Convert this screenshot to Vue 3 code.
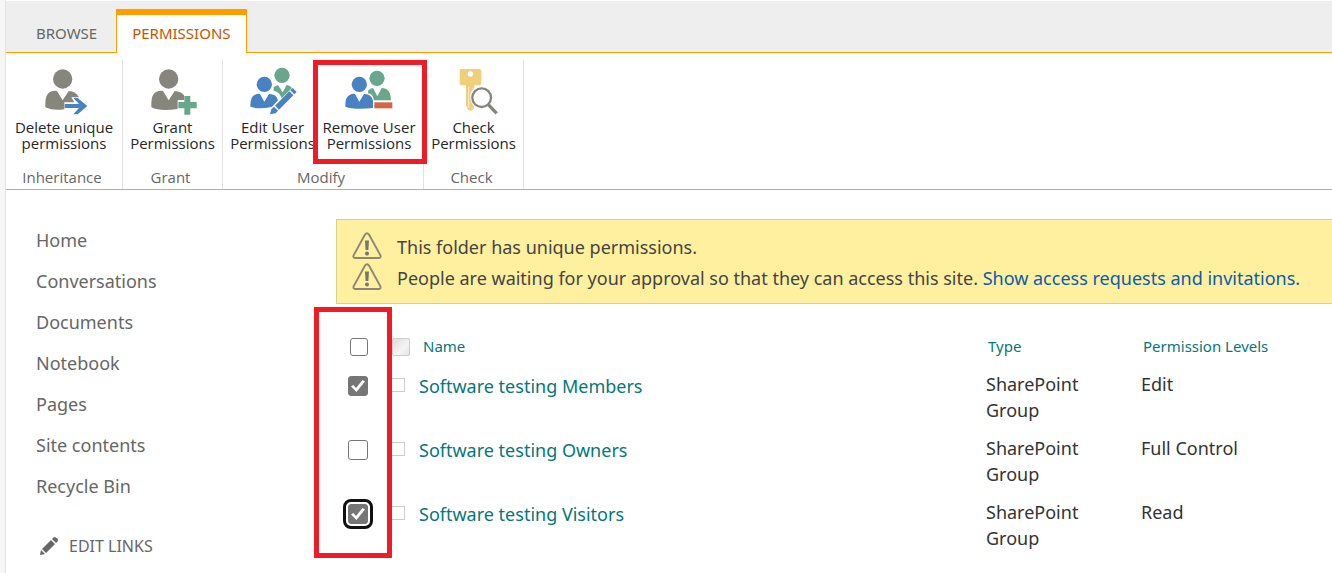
<script setup>
import { ref } from 'vue'

const nav = ['Home', 'Conversations', 'Documents', 'Notebook', 'Pages', 'Site contents', 'Recycle Bin']
const allSelected = ref(false)
const groups = ref([
  { name: 'Software testing Members', level: 'Edit', selected: true, focused: false },
  { name: 'Software testing Owners', level: 'Full Control', selected: false, focused: false },
  { name: 'Software testing Visitors', level: 'Read', selected: true, focused: true }
])
</script>

<template>
  <div class="page">
    <nav class="tabs" aria-label="Ribbon tabs">
      <a class="tab" href="#">BROWSE</a>
      <a class="tab active" href="#">PERMISSIONS</a>
    </nav>

    <section class="ribbon">
      <div class="group">
        <div class="tools">
          <button class="tool" type="button">
            <svg viewBox="15 15 144 144">
              <circle cx="83" cy="51" r="29" fill="#87867d" />
              <path d="M31 136V122Q32 97 45 90Q56 85 66 87L83 115L101 87Q121 87 132 106H109L118 121H88V142Q54 147 31 136Z" fill="#87867d" />
              <path d="M89 126H132L115 108H128L157 132L128 157H115L132 138H89Z" fill="#4882c3" />
            </svg>
            Delete unique<br />permissions
          </button>
        </div>
        <h2>Inheritance</h2>
      </div>

      <div class="group">
        <div class="tools">
          <button class="tool" type="button">
            <svg viewBox="12 15 144 144">
              <circle cx="71" cy="51" r="29" fill="#87867d" />
              <path d="M19 136V122Q20 97 33 90Q44 85 54 87L71 115L89 87Q108 88 117 100V114H98V141Q45 149 19 136Z" fill="#87867d" />
              <path d="M118 102H136V120H155V139H136V158H118V139H100V120H118Z" fill="#69a78d" />
            </svg>
            Grant<br />Permissions
          </button>
        </div>
        <h2>Grant</h2>
      </div>

      <div class="group">
        <div class="tools">
          <button class="tool" type="button">
            <svg viewBox="13 15 144 144">
              <circle cx="112" cy="40" r="23" fill="#69a78d" />
              <path d="M87 75L100 69L114 91L126 69Q137 71 142 78L111 109Q105 90 87 86Z" fill="#69a78d" />
              <circle cx="59" cy="67" r="23" fill="#4882c3" />
              <path d="M17 134Q16 103 31 98Q39 94 46 96L59 119L73 96Q95 95 100 115L82 134Q43 143 17 134Z" fill="#4882c3" />
              <path d="M144 78L156 90L149 97L137 85ZM134 88L146 100L103 143L91 131ZM88 134L100 146L93 154L76 157L80 142Z" fill="#4882c3" />
            </svg>
            Edit User<br />Permissions
          </button>
          <button class="tool remove" type="button">
            <svg viewBox="16 15 144 144">
              <circle cx="112" cy="49" r="23" fill="#69a78d" />
              <path d="M85 86Q92 78 100 78L113 103L126 78Q153 78 154 115H103Q99 94 85 94Z" fill="#69a78d" />
              <circle cx="59" cy="67" r="23" fill="#4882c3" />
              <path d="M17 134Q16 103 31 98Q39 94 46 96L59 119L73 96Q95 95 100 116V138Q43 144 17 134Z" fill="#4882c3" />
              <path d="M104 121H158V139H104Z" fill="#d56443" />
            </svg>
            Remove User<br />Permissions
            <span class="marker marker-button"></span>
          </button>
        </div>
        <h2>Modify</h2>
      </div>

      <div class="group">
        <div class="tools">
          <button class="tool" type="button">
            <svg viewBox="3 15 144 144">
              <path fill-rule="evenodd" d="M37 21H91Q97 21 97 27V64Q97 70 91 70H76V78Q62 90 64 108Q66 124 74 131V140Q65 152 55 141V136L51 132V70H37Q32 70 32 64V27Q32 21 37 21ZM64 28A8 8 0 1 0 64 44A8 8 0 1 0 64 28Z" fill="#f0ce7c" />
              <path d="M59 75V137" stroke="#fff" stroke-width="2" />
              <circle cx="98" cy="107" r="28" fill="#fff" stroke="#87867d" stroke-width="7" />
              <path d="M118 128L143 154" stroke="#87867d" stroke-width="10" />
            </svg>
            Check<br />Permissions
          </button>
        </div>
        <h2>Check</h2>
      </div>
    </section>

    <div class="body">
      <nav class="side" aria-label="Site">
        <a v-for="item in nav" :key="item" href="#">{{ item }}</a>
        <button class="edit-links" type="button">
          <svg viewBox="0 0 18 18">
            <path d="M0 18L1 13L5 17ZM2 12L11 3L15 7L6 16ZM12 2L14 0Q16 0 17.500 1.500Q18 3 18 4L16 6Z" fill="#666" />
          </svg>
          EDIT LINKS
        </button>
      </nav>

      <main>
        <div class="notice">
          <p v-for="n in 2" :key="n">
            <svg viewBox="0 0 30 27">
              <path d="M13 2.500Q15 0 17 2.500L28.500 23.500Q29 26 27 26H3Q1 26 1.500 23.500Z" fill="none" stroke="#8b8776" stroke-width="1.900" />
              <path d="M13 8.500H17L16.400 18H13.600Z" fill="#77746c" />
              <circle cx="15" cy="21.500" r="2" fill="#77746c" />
            </svg>
            <span v-if="n === 1">This folder has unique permissions.</span>
            <span v-else>People are waiting for your approval so that they can access this site. <a href="#">Show access requests and invitations.</a></span>
          </p>
        </div>

        <div class="list">
          <table>
            <thead>
              <tr>
                <th class="pick"><input v-model="allSelected" type="checkbox" aria-label="Select all" /></th>
                <th class="state"><span class="swatch"></span></th>
                <th class="name"><a href="#">Name</a></th>
                <th class="type"><a href="#">Type</a></th>
                <th class="level"><a href="#">Permission Levels</a></th>
              </tr>
            </thead>
            <tbody>
              <tr v-for="g in groups" :key="g.name">
                <td class="pick"><input v-model="g.selected" type="checkbox" :class="{ focused: g.focused }" :aria-label="g.name" /></td>
                <td class="state"><span class="presence"></span></td>
                <td class="name"><a href="#">{{ g.name }}</a></td>
                <td class="type">SharePoint Group</td>
                <td class="level">{{ g.level }}</td>
              </tr>
            </tbody>
          </table>
          <span class="marker marker-column"></span>
        </div>
      </main>
    </div>
  </div>
</template>

<style>
body {
  background: #fff;
  overflow: hidden;
}
</style>

<style scoped>
.page {
  box-sizing: border-box;
  min-height: 100vh;
  border-left: 5px solid #f6f6f6;
  padding: 1px 0 0 1px;
  font-family: "Noto Sans", "Open Sans", sans-serif;
  font-size: 18px;
  line-height: 26px;
  color: #333;
  box-shadow: inset 1px 0 #e3e3e3;
}
a {
  text-decoration: none;
  color: inherit;
}
button {
  font: inherit;
  color: inherit;
  background: none;
  border: 0;
  padding: 0;
}
.tabs {
  display: flex;
  align-items: flex-end;
  gap: 3px;
  height: 51px;
  padding-left: 14px;
  background: #eee;
  border-bottom: 1px solid #ff9d00;
}
.tab {
  padding: 0 16px 1px;
  font-size: 15px;
  line-height: 36px;
  color: #666;
}
.tab.active {
  margin-bottom: -1px;
  padding: 0 15px 2px;
  border: 1px solid #ff9d00;
  border-top-width: 6px;
  border-bottom: 0;
  background: #fff;
  color: #c45500;
}
.ribbon {
  display: flex;
  padding-top: 7px;
  border-bottom: 1px solid #f5a623;
}
.group {
  min-width: 99px;
  padding-top: 7px;
  border-right: 1px solid #e1e1e1;
}
.group:first-child {
  min-width: 116px;
}
.tools {
  display: flex;
}
.tool {
  position: relative;
  flex: 1;
  min-width: 99px;
  font-family: "Open Sans", "Noto Sans", sans-serif;
  font-size: 15px;
  line-height: 16px;
  text-align: center;
  color: #262626;
  white-space: nowrap;
}
.tool svg {
  display: block;
  width: 48px;
  height: 48px;
  margin: 0 auto 4px;
}
.tool.remove {
  min-width: 94px;
  margin-right: 7px;
}
.group h2 {
  margin: 18px 4px 4px 0;
  font-family: "Open Sans", "Noto Sans", sans-serif;
  font-size: 15px;
  font-weight: 400;
  line-height: 16px;
  text-align: center;
  color: #666;
}
.marker {
  position: absolute;
  z-index: 1;
  border: 5px solid #ee1c25;
  pointer-events: none;
}
.marker-button {
  inset: -7px -11px -13px -9px;
}
.marker-column {
  left: -22px;
  top: -13px;
  bottom: 5px;
  width: 68px;
}
.body {
  display: grid;
  grid-template-columns: 330px 1fr;
}
.side {
  display: flex;
  flex-direction: column;
  align-items: flex-start;
  padding: 30px 0 0 30px;
  color: #666;
}
.side a {
  line-height: 41px;
}
.edit-links {
  display: flex;
  align-items: center;
  gap: 11px;
  margin-top: 26px;
  padding-left: 4px;
  font-size: 16px;
}
.edit-links svg {
  width: 18px;
  height: 18px;
}
main {
  padding-top: 29px;
  min-width: 0;
}
.notice {
  padding: 12px 15px 9px;
  border: 1px solid #d8d284;
  border-right: 0;
  background: #fff09f;
  color: #444;
  white-space: nowrap;
}
.notice p {
  display: flex;
  align-items: flex-start;
  gap: 15px;
  margin: 0;
  line-height: 31px;
}
.notice svg {
  width: 30px;
  height: 27px;
}
.notice a {
  color: #0b5cad;
}
.list {
  position: relative;
  margin-top: 16px;
}
table {
  width: 100%;
  border-collapse: collapse;
  table-layout: fixed;
}
th,
td {
  padding: 0 0 12px;
  text-align: left;
  vertical-align: top;
  font-weight: 400;
}
th {
  padding: 13px 0 12px 2px;
  font-size: 15px;
}
.pick {
  width: 51px;
}
.state {
  width: 32px;
}
th.name {
  padding-left: 4px;
}
td.name {
  padding-top: 2px;
  padding-bottom: 10px;
}
.type {
  width: 153px;
}
td.type {
  padding-right: 40px;
}
.level {
  width: 189px;
}
th.pick,
th.state {
  padding: 18px 0 0;
}
td.pick {
  padding-top: 5px;
  padding-bottom: 0;
}
th a,
.name a {
  color: #037878;
}
input {
  appearance: none;
  display: grid;
  place-items: center;
  box-sizing: border-box;
  width: 20px;
  height: 20px;
  margin: 0 0 0 12px;
  border: 1px solid #767676;
  border-radius: 3px;
  background: #fff;
}
th input {
  width: 18px;
  height: 18px;
  margin-left: 14px;
}
input:checked {
  background: #767676;
}
input:checked::after {
  content: "";
  width: 14px;
  height: 12px;
  background: #fff;
  clip-path: polygon(0 55%, 17% 42%, 36% 66%, 82% 0, 100% 13%, 39% 100%);
}
.focused {
  outline: 3px solid #101010;
  outline-offset: 2px;
}
.swatch,
.presence {
  display: block;
  box-sizing: border-box;
  width: 18px;
  border: 1px solid #ccc;
}
.swatch {
  height: 18px;
  margin-left: 5px;
  border-radius: 2px;
  background: linear-gradient(135deg, #ddd, #f4f4f4 60%, #e6e6e6);
}
.presence {
  height: 14px;
  margin-top: 7px;
}
</style>
